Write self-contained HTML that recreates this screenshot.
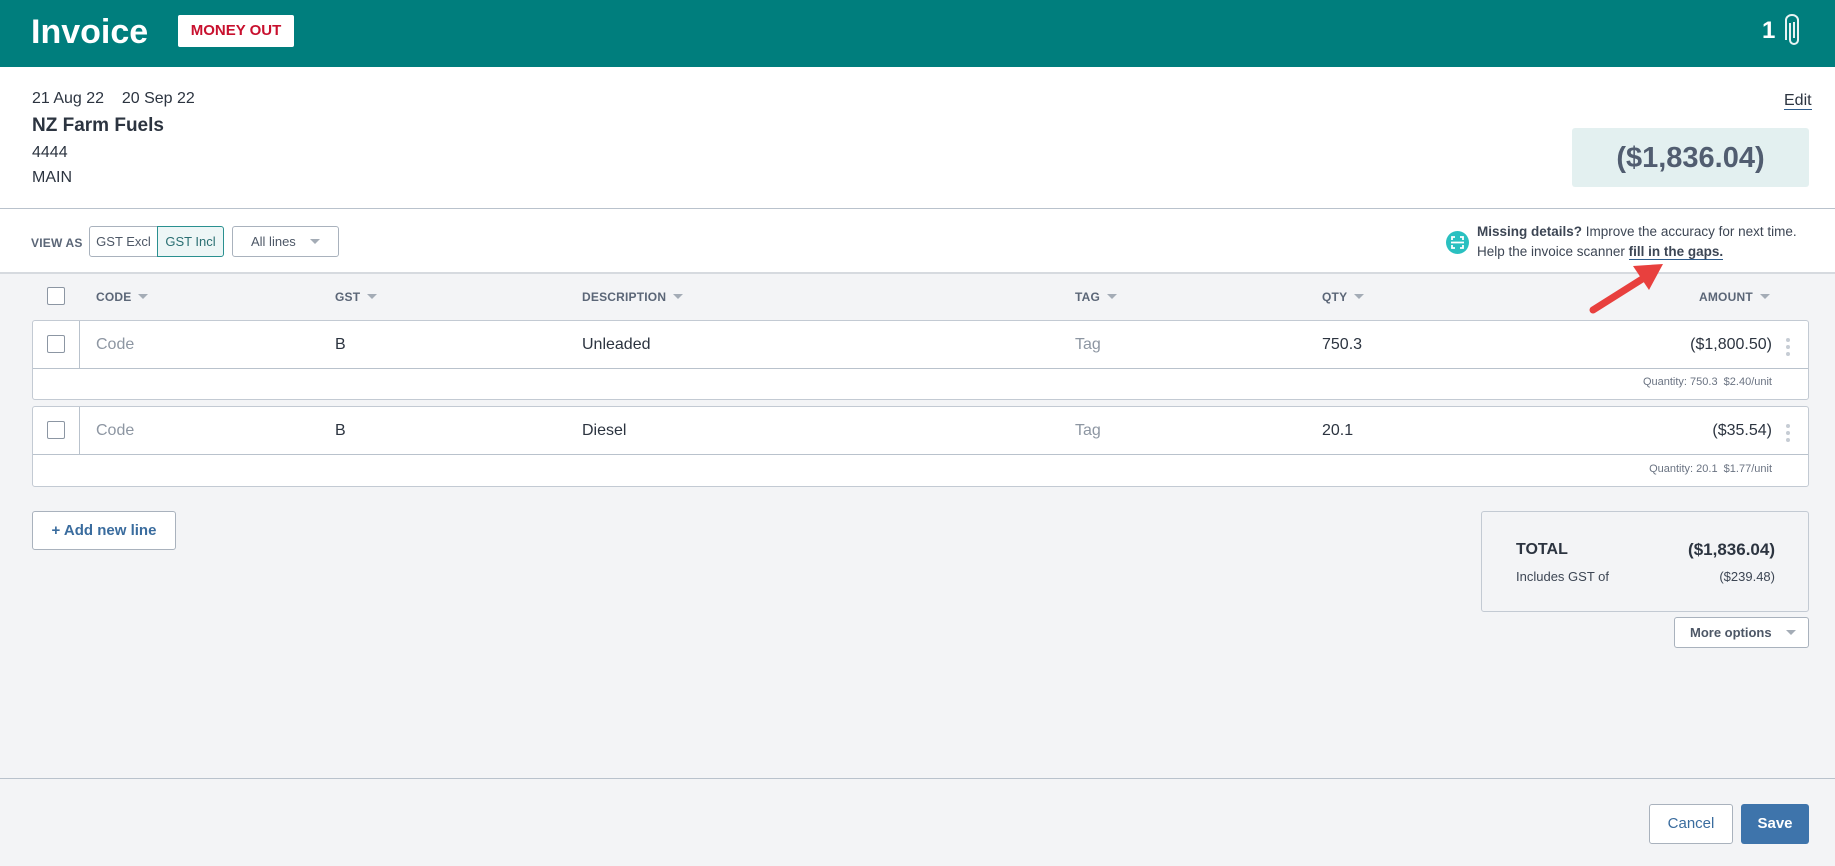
<!DOCTYPE html>
<html><head><meta charset="utf-8"><style>
*{box-sizing:border-box;margin:0;padding:0}
body{width:1835px;height:866px;overflow:hidden;background:#f3f4f6;font-family:"Liberation Sans",sans-serif;color:#2c3440;position:relative}
.abs{position:absolute}
.hdr{left:0;top:0;width:1835px;height:67px;background:#007e7d;box-shadow:0 2px 4px rgba(0,0,0,.25)}
.top{left:0;top:67px;width:1835px;height:206px;background:#fff}
.ln{height:1px;background:#b9c2cc}
.ch{font-size:12px;font-weight:bold;color:#5b6677;letter-spacing:.2px}
.tri{display:inline-block;width:0;height:0;border-left:5px solid transparent;border-right:5px solid transparent;border-top:5px solid #a4acb6;margin-left:7px;vertical-align:2px}
.row{left:32px;width:1777px;background:#fff;border:1px solid #c3cad3;border-radius:3px}
.cb{width:18px;height:18px;border:1px solid #8c96a3;border-radius:2px;background:#fff}
.t{font-size:16px}
.dots{width:4px}
.dots i{display:block;width:4px;height:4px;border-radius:2px;background:#c6ccd4;margin-bottom:3px}
.btn{border:1px solid #a9b2bd;border-radius:3px;background:#fff}
</style></head><body>
<div class="abs hdr"></div>
<div class="abs" style="left:31px;top:13px;font-size:34px;font-weight:bold;color:#fff">Invoice</div>
<div class="abs" style="left:178px;top:15px;width:116px;height:32px;background:#fff;border-radius:2px;color:#c8102e;font-weight:bold;font-size:15px;text-align:center;line-height:32px">MONEY OUT</div>
<div class="abs" style="left:1762px;top:17px;font-size:24px;font-weight:bold;color:#fff">1</div>
<svg class="abs" style="left:1784px;top:14px" width="20" height="34" viewBox="0 0 20 34"><path d="M6 9 V26 a4 4 0 0 0 8 0 V6 a6 5 0 0 0 -12 0 V26" fill="none" stroke="#e8f3f3" stroke-width="2"/><path d="M10 8 V24" stroke="#e8f3f3" stroke-width="2"/></svg>

<div class="abs top"></div>
<div class="abs t" style="left:32px;top:90px">21 Aug 22 &nbsp;&nbsp; 20 Sep 22</div>
<div class="abs" style="left:32px;top:115px;font-size:19px;font-weight:bold">NZ Farm Fuels</div>
<div class="abs t" style="left:32px;top:144px">4444</div>
<div class="abs t" style="left:32px;top:169px">MAIN</div>
<div class="abs t" style="left:1784px;top:92px;border-bottom:1px solid #2e5b8a;line-height:17px">Edit</div>
<div class="abs" style="left:1572px;top:128px;width:237px;height:59px;background:#e3f0f0;border-radius:3px;text-align:center;line-height:61px;font-size:29px;font-weight:bold;color:#515d70">($1,836.04)</div>
<div class="abs ln" style="left:0;top:208px;width:1835px"></div>

<div class="abs ch" style="left:31px;top:236px">VIEW AS</div>
<div class="abs btn" style="left:89px;top:226px;width:69px;height:31px;border-radius:3px 0 0 3px;font-size:13px;line-height:29px;text-align:center;color:#4d5766">GST Excl</div>
<div class="abs" style="left:157px;top:226px;width:67px;height:31px;border:1px solid #2a9090;border-radius:0 3px 3px 0;background:#edf6f6;font-size:13px;line-height:29px;text-align:center;color:#2a6f72">GST Incl</div>
<div class="abs btn" style="left:232px;top:226px;width:107px;height:31px;font-size:13px;line-height:29px;color:#4d5766;padding-left:18px">All lines<span class="tri" style="margin-left:14px"></span></div>

<svg class="abs" style="left:1446px;top:231px" width="23" height="23" viewBox="0 0 23 23"><circle cx="11.5" cy="11.5" r="11.5" fill="#2ac0c0"/><path d="M6 9V6h3M14 6h3v3M17 14v3h-3M9 17H6v-3M5 11.5h13" stroke="#fff" stroke-width="1.8" fill="none"/></svg>
<div class="abs" style="left:1477px;top:224px;font-size:13.5px;color:#3d4654"><b>Missing details?</b> Improve the accuracy for next time.</div>
<div class="abs" style="left:1477px;top:244px;font-size:13.5px;color:#3d4654">Help the invoice scanner <b style="border-bottom:1px solid #2e5b8a">fill in the gaps.</b></div>
<div class="abs ln" style="left:0;top:272px;width:1835px;height:2px;background:#d6dadf"></div>

<div class="abs cb" style="left:47px;top:287px"></div>
<div class="abs ch" style="left:96px;top:290px">CODE<span class="tri"></span></div>
<div class="abs ch" style="left:335px;top:290px">GST<span class="tri"></span></div>
<div class="abs ch" style="left:582px;top:290px">DESCRIPTION<span class="tri"></span></div>
<div class="abs ch" style="left:1075px;top:290px">TAG<span class="tri"></span></div>
<div class="abs ch" style="left:1322px;top:290px">QTY<span class="tri"></span></div>
<div class="abs ch" style="left:1699px;top:290px">AMOUNT<span class="tri"></span></div>

<div class="abs row" style="top:320px;height:80px"></div>
<div class="abs ln" style="left:33px;top:368px;width:1775px"></div>
<div class="abs ln" style="left:79px;top:321px;width:1px;height:47px"></div>
<div class="abs cb" style="left:47px;top:335px"></div>
<div class="abs t" style="left:96px;top:336px;color:#8d96a2">Code</div>
<div class="abs t" style="left:335px;top:336px">B</div>
<div class="abs t" style="left:582px;top:336px">Unleaded</div>
<div class="abs t" style="left:1075px;top:336px;color:#8d96a2">Tag</div>
<div class="abs t" style="left:1322px;top:336px">750.3</div>
<div class="abs t" style="left:1600px;width:172px;text-align:right;top:336px">($1,800.50)</div>
<div class="abs dots" style="left:1786px;top:338px"><i></i><i></i><i></i></div>
<div class="abs" style="left:1500px;width:272px;text-align:right;top:376px;font-size:11px;color:#6a7382">Quantity: 750.3 &nbsp;$2.40/unit</div>

<div class="abs row" style="top:406px;height:81px"></div>
<div class="abs ln" style="left:33px;top:454px;width:1775px"></div>
<div class="abs ln" style="left:79px;top:407px;width:1px;height:47px"></div>
<div class="abs cb" style="left:47px;top:421px"></div>
<div class="abs t" style="left:96px;top:422px;color:#8d96a2">Code</div>
<div class="abs t" style="left:335px;top:422px">B</div>
<div class="abs t" style="left:582px;top:422px">Diesel</div>
<div class="abs t" style="left:1075px;top:422px;color:#8d96a2">Tag</div>
<div class="abs t" style="left:1322px;top:422px">20.1</div>
<div class="abs t" style="left:1600px;width:172px;text-align:right;top:422px">($35.54)</div>
<div class="abs dots" style="left:1786px;top:424px"><i></i><i></i><i></i></div>
<div class="abs" style="left:1500px;width:272px;text-align:right;top:463px;font-size:11px;color:#6a7382">Quantity: 20.1 &nbsp;$1.77/unit</div>

<div class="abs btn" style="left:32px;top:511px;width:144px;height:39px;font-size:15px;font-weight:bold;color:#3a6c9e;line-height:37px;text-align:center">+ Add new line</div>

<div class="abs" style="left:1481px;top:511px;width:328px;height:101px;border:1px solid #c3cad3;border-radius:3px;background:#f3f4f6"></div>
<div class="abs" style="left:1516px;top:541px;font-size:16px;font-weight:bold">TOTAL</div>
<div class="abs" style="left:1600px;width:175px;text-align:right;top:540px;font-size:17px;font-weight:bold">($1,836.04)</div>
<div class="abs" style="left:1516px;top:569px;font-size:13px;color:#3d4654">Includes GST of</div>
<div class="abs" style="left:1600px;width:175px;text-align:right;top:569px;font-size:13px;color:#3d4654">($239.48)</div>
<div class="abs btn" style="left:1674px;top:617px;width:135px;height:31px;font-size:13px;color:#4d5766;line-height:29px;padding-left:15px;font-weight:bold">More options<span class="tri" style="margin-left:14px"></span></div>

<svg class="abs" style="left:1585px;top:258px" width="85" height="60" viewBox="0 0 85 60"><path d="M8 52 L62 18" stroke="#e8403e" stroke-width="7" stroke-linecap="round"/><path d="M48 8 L78 6 L64 32 Z" fill="#e8403e"/></svg>

<div class="abs ln" style="left:0;top:778px;width:1835px"></div>
<div class="abs btn" style="left:1649px;top:804px;width:84px;height:40px;font-size:15px;color:#3a6c9e;line-height:38px;text-align:center">Cancel</div>
<div class="abs" style="left:1741px;top:804px;width:68px;height:40px;background:#3e74ab;border-radius:3px;font-size:15px;font-weight:bold;color:#fff;line-height:40px;text-align:center">Save</div>
</body></html>
